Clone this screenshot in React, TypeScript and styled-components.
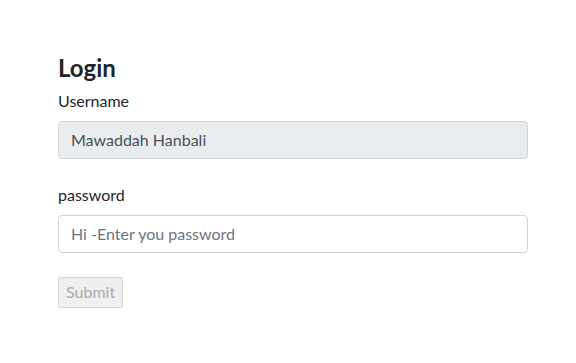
import React from "react";
import styled, { createGlobalStyle } from "styled-components";

const Global = createGlobalStyle`
  html, body { margin: 0; padding: 0; background: #fff; }
  body {
    font-family: "Segoe UI", Lato, "Noto Sans", "Liberation Sans", sans-serif;
    color: #212529;
    font-size: 16px;
    line-height: 1.5;
  }
  * { box-sizing: border-box; }
`;

const Page = styled.div`
  padding: 54px 48px 0 58px;
`;

const Form = styled.form`
  width: 470px;
  display: flex;
  flex-direction: column;
`;

const Title = styled.h4`
  margin: 0 0 6px;
  font-size: 24px;
  font-weight: 700;
  line-height: 1.2;
`;

const Group = styled.div`
  display: flex;
  flex-direction: column;
  margin-bottom: 24px;
`;

const Label = styled.label`
  margin-bottom: 8px;
  line-height: 24px;
`;

const Input = styled.input<{ $filled?: boolean }>`
  height: 38px;
  padding: 6px 12px;
  font: inherit;
  color: #495057;
  background: ${(p) => (p.$filled ? "#e9ecef" : "#fff")};
  border: 1px solid #ced4da;
  border-radius: 4px;
  outline: none;
  &::placeholder { color: #6c757d; opacity: 1; }
`;

const Button = styled.button`
  align-self: flex-start;
  height: 31px;
  padding: 1px 7px;
  font: inherit;
  color: #a9a9a9;
  background: #efefef;
  border: 1px solid #d6d6d6;
  border-radius: 2px;
`;

export default function App() {
  return (
    <>
      <Global />
      <Page>
        <Form onSubmit={(e) => e.preventDefault()}>
          <Title>Login</Title>
          <Group>
            <Label>Username</Label>
            <Input $filled readOnly value="Mawaddah Hanbali" />
          </Group>
          <Group>
            <Label>password</Label>
            <Input type="password" placeholder="Hi -Enter you password" />
          </Group>
          <Button type="submit" disabled>Submit</Button>
        </Form>
      </Page>
    </>
  );
}
